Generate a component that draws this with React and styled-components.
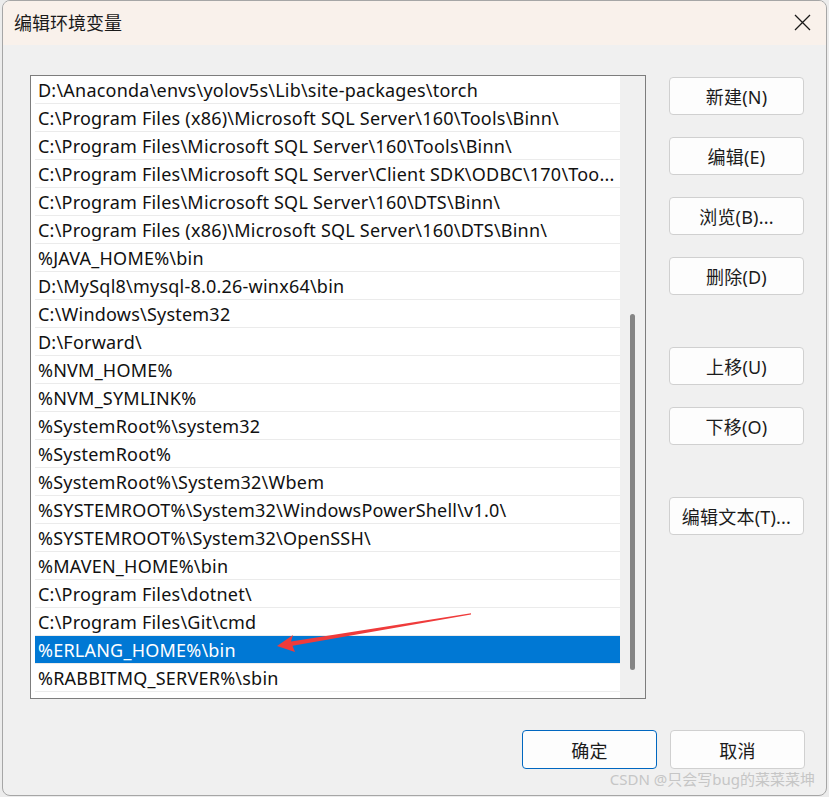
import React from "react";
import styled, { createGlobalStyle } from "styled-components";

const GlobalStyle = createGlobalStyle`
  html, body {
    margin: 0;
    padding: 0;
    background: #ececec;
  }
  * {
    box-sizing: border-box;
  }
`;

const FONT = `"Noto Sans", "Noto Sans CJK SC", sans-serif`;

const Page = styled.div`
  position: relative;
  width: 829px;
  height: 797px;
  padding-left: 2px;
  font-family: ${FONT};
  color: #1a1a1a;
`;

const Window = styled.div`
  display: flex;
  flex-direction: column;
  width: 825px;
  height: 796px;
  border: 1px solid #a6a6a6;
  border-radius: 8px;
  overflow: hidden;
  background: #f0f0f0;
`;

const TitleBar = styled.div`
  display: flex;
  align-items: center;
  justify-content: space-between;
  height: 44px;
  padding: 0 15px 2px 11px;
  background: #f9f1eb;
  font-size: 18px;
`;

const CloseButton = styled.div`
  display: flex;
  align-items: center;
  justify-content: center;
  width: 18px;
  height: 18px;
`;

const Body = styled.div`
  display: flex;
  flex-direction: column;
  padding: 30px 21px 0 27px;
`;

const Main = styled.div`
  display: flex;
  gap: 23px;
`;

const ListBox = styled.div`
  display: flex;
  width: 616px;
  height: 624px;
  border: 1px solid #7d7d7d;
  background: #fff;
`;

const Rows = styled.div`
  flex: 1;
  min-width: 0;
  overflow: hidden;
  padding-left: 4px;
`;

const Row = styled.div`
  height: 28px;
  line-height: 28px;
  padding-left: 3px;
  font-size: 18px;
  letter-spacing: 0.22px;
  white-space: nowrap;
  overflow: hidden;
  border-bottom: 1px solid #ebebeb;
  background: ${(p) => (p.$selected ? "#0078d4" : "transparent")};
  color: ${(p) => (p.$selected ? "#fff" : "#111")};
`;

const Track = styled.div`
  width: 25px;
  padding: 238px 0 0 10px;
  background: #f0f0f0;
`;

const Thumb = styled.div`
  width: 5px;
  height: 356px;
  border-radius: 3px;
  background: #858585;
`;

const ButtonColumn = styled.div`
  display: flex;
  flex-direction: column;
  padding-top: 2px;
`;

const Button = styled.div`
  display: flex;
  align-items: center;
  justify-content: center;
  width: 135px;
  height: ${(p) => p.$height || 38}px;
  margin-top: ${(p) => p.$gap || 0}px;
  border: 1px solid ${(p) => (p.$primary ? "#0067c0" : "#d0d0d0")};
  border-radius: 4px;
  background: #fdfdfd;
  font-size: 18px;
  letter-spacing: 0.2px;
  color: #1b1b1b;
`;

const Footer = styled.div`
  display: flex;
  justify-content: flex-end;
  gap: 13px;
  margin-top: 31px;
`;

const Watermark = styled.div`
  position: absolute;
  right: 14px;
  bottom: 8px;
  font-size: 15px;
  color: #c6c6c6;
  white-space: nowrap;
`;

const Overlay = styled.svg`
  position: absolute;
  left: 0;
  top: 0;
  pointer-events: none;
`;

const paths = [
  "D:\\Anaconda\\envs\\yolov5s\\Lib\\site-packages\\torch",
  "C:\\Program Files (x86)\\Microsoft SQL Server\\160\\Tools\\Binn\\",
  "C:\\Program Files\\Microsoft SQL Server\\160\\Tools\\Binn\\",
  "C:\\Program Files\\Microsoft SQL Server\\Client SDK\\ODBC\\170\\Too...",
  "C:\\Program Files\\Microsoft SQL Server\\160\\DTS\\Binn\\",
  "C:\\Program Files (x86)\\Microsoft SQL Server\\160\\DTS\\Binn\\",
  "%JAVA_HOME%\\bin",
  "D:\\MySql8\\mysql-8.0.26-winx64\\bin",
  "C:\\Windows\\System32",
  "D:\\Forward\\",
  "%NVM_HOME%",
  "%NVM_SYMLINK%",
  "%SystemRoot%\\system32",
  "%SystemRoot%",
  "%SystemRoot%\\System32\\Wbem",
  "%SYSTEMROOT%\\System32\\WindowsPowerShell\\v1.0\\",
  "%SYSTEMROOT%\\System32\\OpenSSH\\",
  "%MAVEN_HOME%\\bin",
  "C:\\Program Files\\dotnet\\",
  "C:\\Program Files\\Git\\cmd",
  "%ERLANG_HOME%\\bin",
  "%RABBITMQ_SERVER%\\sbin",
  "",
];

const SELECTED = 20;

const sideButtons = [
  { label: "新建(N)", gap: 0 },
  { label: "编辑(E)", gap: 22 },
  { label: "浏览(B)...", gap: 22 },
  { label: "删除(D)", gap: 22 },
  { label: "上移(U)", gap: 52 },
  { label: "下移(O)", gap: 22 },
  { label: "编辑文本(T)...", gap: 52 },
];

const App = () => {
  return (
    <Page>
      <GlobalStyle />
      <Window>
        <TitleBar>
          <span>编辑环境变量</span>
          <CloseButton>
            <svg width="17" height="17" viewBox="0 0 17 17">
              <path d="M1 1 L16 16 M16 1 L1 16" stroke="#1a1a1a" strokeWidth="1.3" />
            </svg>
          </CloseButton>
        </TitleBar>
        <Body>
          <Main>
            <ListBox>
              <Rows>
                {paths.map((p, idx) => (
                  <Row key={idx} $selected={idx === SELECTED}>
                    {p}
                  </Row>
                ))}
              </Rows>
              <Track>
                <Thumb />
              </Track>
            </ListBox>
            <ButtonColumn>
              {sideButtons.map((b) => (
                <Button key={b.label} $gap={b.gap}>
                  {b.label}
                </Button>
              ))}
            </ButtonColumn>
          </Main>
          <Footer>
            <Button $primary $height={39}>确定</Button>
            <Button $height={39}>取消</Button>
          </Footer>
        </Body>
      </Window>
      <Watermark>CSDN @只会写bug的菜菜菜坤</Watermark>
      <Overlay width="829" height="797" viewBox="0 0 829 797">
        <polygon
          points="277,646 293,635 291,641.5 471,613.3 471,614.6 292.5,645.8 295,652"
          fill="#ef3b3b"
        />
      </Overlay>
    </Page>
  );
};

export default App;
